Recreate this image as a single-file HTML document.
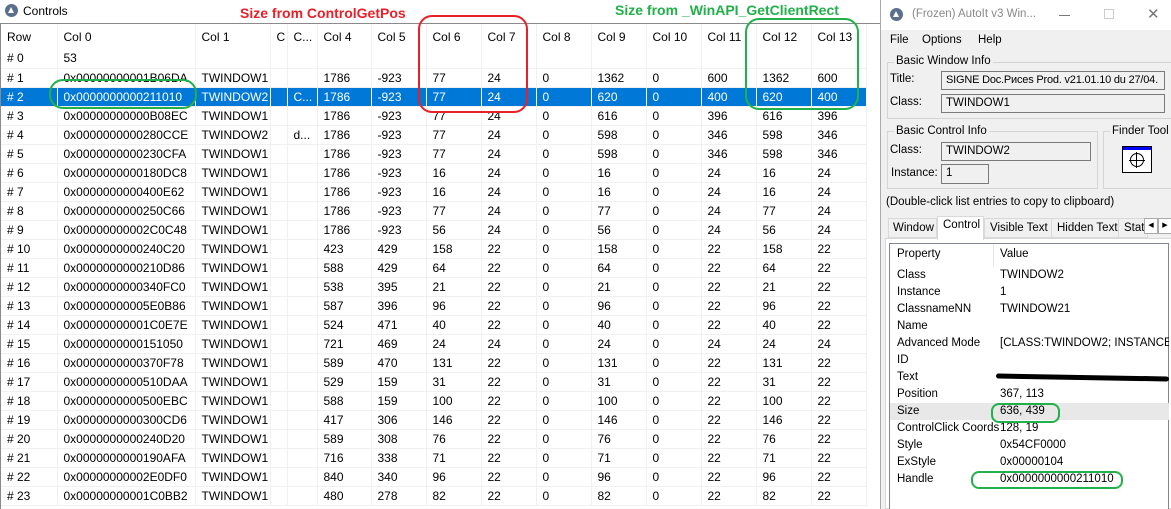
<!DOCTYPE html>
<html><head><meta charset="utf-8"><style>
*{margin:0;padding:0;box-sizing:border-box}
body{width:1171px;height:509px;overflow:hidden;background:#fff;font-family:"Liberation Sans",sans-serif;font-size:12px;color:#000;position:relative}
.a{position:absolute;white-space:nowrap}
table{position:absolute;left:1px;top:24px;border-collapse:collapse;table-layout:fixed;width:865px}
td{height:19px;padding:0 0 0 6px;border-right:1px solid #f0f0f0;border-bottom:1px solid #f0f0f0;overflow:hidden;white-space:nowrap;line-height:18px}
tr.h td{height:25px;border-bottom:none}
tr.s td{background:#0078d7;color:#fff;border-right:1px solid #fff}
.rp{position:absolute;left:880px;top:0;width:291px;height:509px;background:#f0f0f0;border-left:1px solid #aaa;font-size:11.5px}
.box{position:absolute;border:1px solid #d5d5d5}
.tb{position:absolute;border:1px solid #7a7a7a;background:#f0f0f0;padding-left:4px;line-height:17px}
.lv div{position:absolute;white-space:nowrap}
</style></head><body>
<div class="a" style="left:5px;top:4px;width:13px;height:13px;border-radius:50%;background:#5a6f8c"></div>
<div class="a" style="left:8px;top:7px;width:0;height:0;border-left:3.5px solid transparent;border-right:3.5px solid transparent;border-bottom:6px solid #fff"></div>
<div class="a" style="left:23px;top:4px;font-size:12px">Controls</div>
<div class="a" style="left:0;top:23px;width:880px;height:1px;background:#8a8a8a"></div>
<div class="a" style="left:0;top:23px;width:1px;height:486px;background:#8a8a8a"></div>
<table>
<colgroup><col style="width:56px"><col style="width:138px"><col style="width:75px"><col style="width:17px"><col style="width:30px"><col style="width:54px"><col style="width:55px"><col style="width:55px"><col style="width:55px"><col style="width:55px"><col style="width:55px"><col style="width:55px"><col style="width:55px"><col style="width:55px"><col style="width:55px"></colgroup>
<tr class="h"><td>Row</td><td>Col 0</td><td>Col 1</td><td>C</td><td>C...</td><td>Col 4</td><td>Col 5</td><td>Col 6</td><td>Col 7</td><td>Col 8</td><td>Col 9</td><td>Col 10</td><td>Col 11</td><td>Col 12</td><td>Col 13</td></tr>
<tr><td># 0</td><td>53</td><td></td><td></td><td></td><td></td><td></td><td></td><td></td><td></td><td></td><td></td><td></td><td></td><td></td></tr>
<tr><td># 1</td><td>0x00000000001B06DA</td><td>TWINDOW1</td><td></td><td></td><td>1786</td><td>-923</td><td>77</td><td>24</td><td>0</td><td>1362</td><td>0</td><td>600</td><td>1362</td><td>600</td></tr>
<tr class="s"><td># 2</td><td>0x0000000000211010</td><td>TWINDOW2</td><td></td><td>C...</td><td>1786</td><td>-923</td><td>77</td><td>24</td><td>0</td><td>620</td><td>0</td><td>400</td><td>620</td><td>400</td></tr>
<tr><td># 3</td><td>0x00000000000B08EC</td><td>TWINDOW1</td><td></td><td></td><td>1786</td><td>-923</td><td>77</td><td>24</td><td>0</td><td>616</td><td>0</td><td>396</td><td>616</td><td>396</td></tr>
<tr><td># 4</td><td>0x0000000000280CCE</td><td>TWINDOW2</td><td></td><td>d...</td><td>1786</td><td>-923</td><td>77</td><td>24</td><td>0</td><td>598</td><td>0</td><td>346</td><td>598</td><td>346</td></tr>
<tr><td># 5</td><td>0x0000000000230CFA</td><td>TWINDOW1</td><td></td><td></td><td>1786</td><td>-923</td><td>77</td><td>24</td><td>0</td><td>598</td><td>0</td><td>346</td><td>598</td><td>346</td></tr>
<tr><td># 6</td><td>0x0000000000180DC8</td><td>TWINDOW1</td><td></td><td></td><td>1786</td><td>-923</td><td>16</td><td>24</td><td>0</td><td>16</td><td>0</td><td>24</td><td>16</td><td>24</td></tr>
<tr><td># 7</td><td>0x0000000000400E62</td><td>TWINDOW1</td><td></td><td></td><td>1786</td><td>-923</td><td>16</td><td>24</td><td>0</td><td>16</td><td>0</td><td>24</td><td>16</td><td>24</td></tr>
<tr><td># 8</td><td>0x0000000000250C66</td><td>TWINDOW1</td><td></td><td></td><td>1786</td><td>-923</td><td>77</td><td>24</td><td>0</td><td>77</td><td>0</td><td>24</td><td>77</td><td>24</td></tr>
<tr><td># 9</td><td>0x00000000002C0C48</td><td>TWINDOW1</td><td></td><td></td><td>1786</td><td>-923</td><td>56</td><td>24</td><td>0</td><td>56</td><td>0</td><td>24</td><td>56</td><td>24</td></tr>
<tr><td># 10</td><td>0x0000000000240C20</td><td>TWINDOW1</td><td></td><td></td><td>423</td><td>429</td><td>158</td><td>22</td><td>0</td><td>158</td><td>0</td><td>22</td><td>158</td><td>22</td></tr>
<tr><td># 11</td><td>0x0000000000210D86</td><td>TWINDOW1</td><td></td><td></td><td>588</td><td>429</td><td>64</td><td>22</td><td>0</td><td>64</td><td>0</td><td>22</td><td>64</td><td>22</td></tr>
<tr><td># 12</td><td>0x0000000000340FC0</td><td>TWINDOW1</td><td></td><td></td><td>538</td><td>395</td><td>21</td><td>22</td><td>0</td><td>21</td><td>0</td><td>22</td><td>21</td><td>22</td></tr>
<tr><td># 13</td><td>0x00000000005E0B86</td><td>TWINDOW1</td><td></td><td></td><td>587</td><td>396</td><td>96</td><td>22</td><td>0</td><td>96</td><td>0</td><td>22</td><td>96</td><td>22</td></tr>
<tr><td># 14</td><td>0x00000000001C0E7E</td><td>TWINDOW1</td><td></td><td></td><td>524</td><td>471</td><td>40</td><td>22</td><td>0</td><td>40</td><td>0</td><td>22</td><td>40</td><td>22</td></tr>
<tr><td># 15</td><td>0x0000000000151050</td><td>TWINDOW1</td><td></td><td></td><td>721</td><td>469</td><td>24</td><td>24</td><td>0</td><td>24</td><td>0</td><td>24</td><td>24</td><td>24</td></tr>
<tr><td># 16</td><td>0x0000000000370F78</td><td>TWINDOW1</td><td></td><td></td><td>589</td><td>470</td><td>131</td><td>22</td><td>0</td><td>131</td><td>0</td><td>22</td><td>131</td><td>22</td></tr>
<tr><td># 17</td><td>0x0000000000510DAA</td><td>TWINDOW1</td><td></td><td></td><td>529</td><td>159</td><td>31</td><td>22</td><td>0</td><td>31</td><td>0</td><td>22</td><td>31</td><td>22</td></tr>
<tr><td># 18</td><td>0x0000000000500EBC</td><td>TWINDOW1</td><td></td><td></td><td>588</td><td>159</td><td>100</td><td>22</td><td>0</td><td>100</td><td>0</td><td>22</td><td>100</td><td>22</td></tr>
<tr><td># 19</td><td>0x0000000000300CD6</td><td>TWINDOW1</td><td></td><td></td><td>417</td><td>306</td><td>146</td><td>22</td><td>0</td><td>146</td><td>0</td><td>22</td><td>146</td><td>22</td></tr>
<tr><td># 20</td><td>0x0000000000240D20</td><td>TWINDOW1</td><td></td><td></td><td>589</td><td>308</td><td>76</td><td>22</td><td>0</td><td>76</td><td>0</td><td>22</td><td>76</td><td>22</td></tr>
<tr><td># 21</td><td>0x0000000000190AFA</td><td>TWINDOW1</td><td></td><td></td><td>716</td><td>338</td><td>71</td><td>22</td><td>0</td><td>71</td><td>0</td><td>22</td><td>71</td><td>22</td></tr>
<tr><td># 22</td><td>0x00000000002E0DF0</td><td>TWINDOW1</td><td></td><td></td><td>840</td><td>340</td><td>96</td><td>22</td><td>0</td><td>96</td><td>0</td><td>22</td><td>96</td><td>22</td></tr>
<tr><td># 23</td><td>0x00000000001C0BB2</td><td>TWINDOW1</td><td></td><td></td><td>480</td><td>278</td><td>82</td><td>22</td><td>0</td><td>82</td><td>0</td><td>22</td><td>82</td><td>22</td></tr>
</table>
<div class="a" style="left:240px;top:5px;font-size:14px;font-weight:bold;color:#e8202a">Size from ControlGetPos</div>
<div class="a" style="left:615px;top:2px;font-size:14px;font-weight:bold;color:#22b04a">Size from _WinAPI_GetClientRect</div>
<div class="a" style="left:418px;top:15px;width:110px;height:98px;border:2px solid #e8202a;border-radius:14px"></div>
<div class="a" style="left:745px;top:18px;width:114px;height:92px;border:2px solid #22b04a;border-radius:14px"></div>
<div class="a" style="left:49px;top:79px;width:148px;height:30px;border:2px solid #22b04a;border-radius:14px"></div>

<div class="rp">
 <div class="a" style="left:0;top:0;width:291px;height:30px;background:#fff"></div>
 <div class="a" style="left:9px;top:8px;width:13px;height:13px;border-radius:50%;background:#5a6f8c"></div>
 <div class="a" style="left:12px;top:11px;width:0;height:0;border-left:3.5px solid transparent;border-right:3.5px solid transparent;border-bottom:6px solid #fff"></div>
 <div class="a" style="left:31px;top:8px;color:#888">(Frozen) AutoIt v3 Win...</div>
 <div class="a" style="left:178px;top:15px;width:11px;height:1px;background:#777"></div>
 <div class="a" style="left:223px;top:9px;width:10px;height:10px;border:1px solid #ccc"></div>
 <div class="a" style="left:266px;top:5px;font-size:15px;color:#777">✕</div>
 <div class="a" style="left:9px;top:34px">File</div>
 <div class="a" style="left:41px;top:34px">Options</div>
 <div class="a" style="left:97px;top:34px">Help</div>
 <div class="box" style="left:6px;top:62px;width:290px;height:57px"></div>
 <div class="a" style="left:13px;top:55px;background:#f0f0f0;padding:0 2px">Basic Window Info</div>
 <div class="a" style="left:9px;top:73px">Title:</div>
 <div class="tb" style="left:60px;top:71px;width:224px;height:19px;overflow:hidden;white-space:nowrap;font-size:11px;letter-spacing:-0.2px">SIGNE Doc.Pиcеs Prod. v21.01.10 du 27/04.</div>
 <div class="a" style="left:9px;top:96px">Class:</div>
 <div class="tb" style="left:60px;top:94px;width:224px;height:19px">TWINDOW1</div>
 <div class="box" style="left:6px;top:131px;width:211px;height:58px"></div>
 <div class="a" style="left:13px;top:125px;background:#f0f0f0;padding:0 2px">Basic Control Info</div>
 <div class="a" style="left:9px;top:144px">Class:</div>
 <div class="tb" style="left:60px;top:142px;width:150px;height:19px">TWINDOW2</div>
 <div class="a" style="left:10px;top:167px">Instance:</div>
 <div class="tb" style="left:60px;top:164px;width:48px;height:20px">1</div>
 <div class="box" style="left:222px;top:131px;width:80px;height:58px"></div>
 <div class="a" style="left:229px;top:125px;background:#f0f0f0;padding:0 2px">Finder Tool</div>
 <div class="a" style="left:241px;top:146px;width:30px;height:27px;border:1px solid #000;background:#fff"></div>
 <div class="a" style="left:242px;top:147px;width:28px;height:3px;background:#00f"></div>
 <div class="a" style="left:249px;top:153px;width:14px;height:14px;border:1px solid #000;border-radius:50%"></div>
 <div class="a" style="left:255px;top:152px;width:1px;height:16px;background:#000"></div>
 <div class="a" style="left:248px;top:160px;width:16px;height:1px;background:#000"></div>
 <div class="a" style="left:5px;top:196px">(Double-click list entries to copy to clipboard)</div>
 <div class="a" style="left:7px;top:218px;width:49px;height:20px;border:1px solid #d9d9d9;padding:3px 4px">Window</div>
 <div class="a" style="left:56px;top:216px;width:47px;height:24px;border:1px solid #d9d9d9;border-bottom:none;background:#fff;padding:2px 5px;z-index:2">Control</div>
 <div class="a" style="left:103px;top:218px;width:68px;height:20px;border:1px solid #d9d9d9;padding:3px 5px">Visible Text</div>
 <div class="a" style="left:170px;top:218px;width:68px;height:20px;border:1px solid #d9d9d9;padding:3px 5px">Hidden Text</div>
 <div class="a" style="left:237px;top:218px;width:30px;height:20px;border:1px solid #d9d9d9;padding:3px 5px;overflow:hidden">Stat</div>
 <div class="a" style="left:263px;top:218px;width:14px;height:16px;border:1px solid #aaa;background:#fff;font-size:7px;text-align:center;line-height:14px">◀</div>
 <div class="a" style="left:277px;top:218px;width:14px;height:16px;border:1px solid #aaa;background:#fff;font-size:7px;text-align:center;line-height:14px">▶</div>
 <div class="a" style="left:4px;top:238px;width:287px;height:271px;background:#fff;border:1px solid #d9d9d9"></div>
 <div class="a" style="left:8px;top:243px;width:280px;height:266px;background:#fff;border:1px solid #828790;border-bottom:none"></div>
 <div class="a" style="left:112px;top:244px;width:1px;height:22px;background:#e5e5e5"></div>
 <div class="a" style="left:9px;top:403px;width:279px;height:17px;background:#e8e8e8"></div>
 <div class="lv">
  <div style="left:16px;top:248px">Property</div><div style="left:119px;top:248px">Value</div>
  <div style="left:16px;top:269px">Class</div><div style="left:119px;top:269px">TWINDOW2</div>
  <div style="left:16px;top:286px">Instance</div><div style="left:119px;top:286px">1</div>
  <div style="left:16px;top:303px">ClassnameNN</div><div style="left:119px;top:303px">TWINDOW21</div>
  <div style="left:16px;top:320px">Name</div>
  <div style="left:16px;top:337px">Advanced Mode</div><div style="left:119px;top:337px;width:169px;overflow:hidden">[CLASS:TWINDOW2; INSTANCE:1]</div>
  <div style="left:16px;top:354px">ID</div>
  <div style="left:16px;top:371px">Text</div>
  <div style="left:16px;top:388px">Position</div><div style="left:119px;top:388px">367, 113</div>
  <div style="left:16px;top:405px">Size</div><div style="left:119px;top:405px">636, 439</div>
  <div style="left:16px;top:422px">ControlClick Coords</div><div style="left:119px;top:422px">128, 19</div>
  <div style="left:16px;top:439px">Style</div><div style="left:119px;top:439px">0x54CF0000</div>
  <div style="left:16px;top:456px">ExStyle</div><div style="left:119px;top:456px">0x00000104</div>
  <div style="left:16px;top:473px">Handle</div><div style="left:119px;top:473px">0x0000000000211010</div>
 </div>
 <div class="a" style="left:115px;top:375px;width:173px;height:5px;background:#000;border-radius:3px;transform:rotate(1deg)"></div>
 <div class="a" style="left:110px;top:403px;width:69px;height:20px;border:2px solid #22b04a;border-radius:8px"></div>
 <div class="a" style="left:90px;top:471px;width:152px;height:18px;border:2px solid #22b04a;border-radius:8px"></div>
</div>
</body></html>
